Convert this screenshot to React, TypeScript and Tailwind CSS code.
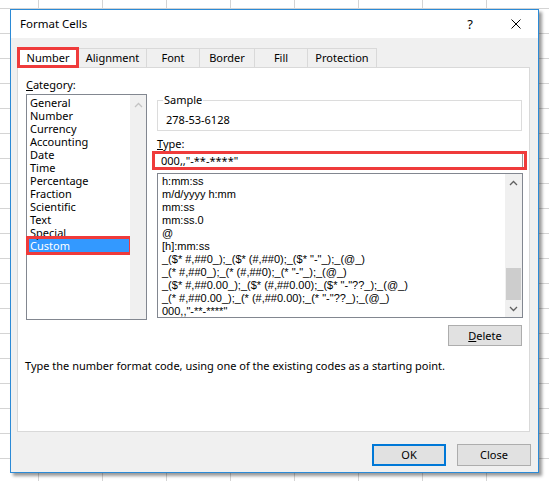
import React from "react";

function Chevron({ up, color }: { up: boolean; color: string }) {
  return (
    <svg width="9" height="6" viewBox="0 0 9 6">
      <polyline
        points={up ? "1,5 4.5,1.5 8,5" : "1,1 4.5,4.5 8,1"}
        fill="none"
        stroke={color}
        strokeWidth="1.3"
      />
    </svg>
  );
}

const categories = [
  "General",
  "Number",
  "Currency",
  "Accounting",
  "Date",
  "Time",
  "Percentage",
  "Fraction",
  "Scientific",
  "Text",
  "Special",
  "Custom",
];

const types = [
  "h:mm:ss",
  "m/d/yyyy h:mm",
  "mm:ss",
  "mm:ss.0",
  "@",
  "[h]:mm:ss",
  '_($* #,##0_);_($* (#,##0);_($* "-"_);_(@_)',
  '_(* #,##0_);_(* (#,##0);_(* "-"_);_(@_)',
  '_($* #,##0.00_);_($* (#,##0.00);_($* "-"??_);_(@_)',
  '_(* #,##0.00_);_(* (#,##0.00);_(* "-"??_);_(@_)',
  '000,,"-**-****"',
];

export default function App() {
  return (
    <div className="w-[549px] h-[481px] overflow-hidden bg-white bg-[linear-gradient(to_right,#d4d4d4_1px,transparent_1px),linear-gradient(to_bottom,#d4d4d4_1px,transparent_1px)] bg-[size:64px_25px] bg-[position:38px_8px] pt-[9px] pl-[10px] font-['Noto_Sans',sans-serif] text-[11px] text-black">
      <div className="w-[529px] h-[464px] border border-[#2b8ad6] bg-[#f0f0f0] flex flex-col shadow-[3px_3px_3px_rgba(0,0,0,0.4)]">
        {/* Title bar */}
        <div className="h-[28px] shrink-0 bg-white flex items-center pl-[9px] pr-[17px]">
          <span className="leading-[16px] text-[11.5px]">Format Cells</span>
          <span className="ml-auto leading-[16px] text-[13px]">?</span>
          <svg className="ml-[38px]" width="10" height="10" viewBox="0 0 10 10">
            <path d="M0.5 0.5 L9.5 9.5 M9.5 0.5 L0.5 9.5" stroke="#000" strokeWidth="1" fill="none" />
          </svg>
        </div>

        {/* Tabs */}
        <div className="h-[29px] shrink-0 flex items-end pl-[6px]">
          <div className="relative z-10 -mb-[1px] w-[62px] h-[21px] bg-white border-[3px] border-[#ef3b3b] flex items-center justify-center leading-[14px]">
            Number
          </div>
          <div className="w-[68px] h-[19px] border-t border-r border-[#d9d9d9] flex items-center justify-center leading-[14px]">
            Alignment
          </div>
          <div className="w-[53px] h-[19px] border-t border-r border-[#d9d9d9] flex items-center justify-center leading-[14px]">
            Font
          </div>
          <div className="w-[55px] h-[19px] border-t border-r border-[#d9d9d9] flex items-center justify-center leading-[14px]">
            Border
          </div>
          <div className="w-[53px] h-[19px] border-t border-r border-[#d9d9d9] flex items-center justify-center leading-[14px]">
            Fill
          </div>
          <div className="w-[69px] h-[19px] border-t border-r border-[#d9d9d9] flex items-center justify-center leading-[14px]">
            Protection
          </div>
        </div>

        {/* Panel */}
        <div className="ml-[6px] w-[513px] h-[365px] shrink-0 bg-white border border-[#d9d9d9] pt-[9px] pl-[8px] flex flex-col">
          <div className="flex gap-[10px]">
            {/* Category */}
            <div className="w-[121px] flex flex-col">
              <div className="h-[16px] leading-[16px]">
                <span className="underline">C</span>ategory:
              </div>
              <div className="mt-[1px] h-[226px] border border-[#828790] flex">
                <div className="flex-1 pt-[1px] pl-[1px]">
                  {categories.map((c) =>
                    c === "Custom" ? (
                      <div
                        key={c}
                        className="mx-[1px] h-[13px] leading-[13px] pl-[1px] bg-[#3399ff] text-white outline-3 outline-solid outline-[#ef3b3b]"
                      >
                        {c}
                      </div>
                    ) : (
                      <div key={c} className="h-[13px] leading-[13px] pl-[2px]">
                        {c}
                      </div>
                    )
                  )}
                </div>
                <div className="w-[16px] bg-[#f0f0f0] flex flex-col items-center pt-[7px]">
                  <Chevron up color="#c4c4c4" />
                </div>
              </div>
            </div>

            {/* Right column */}
            <div className="w-[366px] flex flex-col pt-[15px]">
              <fieldset className="w-[365px] border border-[#dcdcdc]">
                <legend className="ml-[5px] px-[1px] leading-[16px]">Sample</legend>
                <div className="pl-[8px] pt-[4px] pb-[2px] leading-[16px]">278-53-6128</div>
              </fieldset>

              <div className="mt-[6px] h-[14px] leading-[14px]">
                <span className="underline">T</span>ype:
              </div>

              <div className="-ml-[5px] w-[375px] h-[19px] border-[3px] border-[#ef3b3b] bg-white flex items-center">
                <div className="flex-1 h-full mr-[1px] border-r border-[#9a9a9a] flex items-center pl-[6px] leading-[13px] whitespace-pre">
                  000,,"-**-****"
                </div>
              </div>

              <div className="mt-[3px] h-[145px] w-[366px] border border-[#828790] flex">
                <div className="flex-1 overflow-hidden pt-[1px] pl-[4px] font-['Liberation_Sans',Arial,sans-serif] text-[11px]">
                  {types.map((t) => (
                    <div key={t} className="h-[13px] leading-[13px] whitespace-pre">
                      {t}
                    </div>
                  ))}
                </div>
                <div className="w-[17px] bg-[#f0f0f0] flex flex-col">
                  <div className="h-[17px] flex items-center justify-center">
                    <Chevron up color="#606060" />
                  </div>
                  <div className="flex-1 flex flex-col justify-end">
                    <div className="h-[32px] mx-[1px] bg-[#cdcdcd]" />
                  </div>
                  <div className="h-[17px] flex items-center justify-center">
                    <Chevron up={false} color="#606060" />
                  </div>
                </div>
              </div>

              <div className="mt-[7px] self-end mr-[1px] w-[74px] h-[21px] bg-[#e1e1e1] border border-[#adadad] flex items-center justify-center leading-[14px]">
                <span>
                  <span className="underline">D</span>elete
                </span>
              </div>
            </div>
          </div>

          <div className="mt-[12px] -ml-[1px] leading-[16px]">
            Type the number format code, using one of the existing codes as a starting point.
          </div>
        </div>

        {/* Buttons */}
        <div className="mt-[12px] flex justify-end gap-[11px] pr-[7px]">
          <div className="w-[74px] h-[22px] bg-[#e1e1e1] border-2 border-[#0078d7] flex items-center justify-center leading-[14px]">
            OK
          </div>
          <div className="w-[74px] h-[22px] bg-[#e1e1e1] border border-[#adadad] flex items-center justify-center leading-[14px]">
            Close
          </div>
        </div>
      </div>
    </div>
  );
}
